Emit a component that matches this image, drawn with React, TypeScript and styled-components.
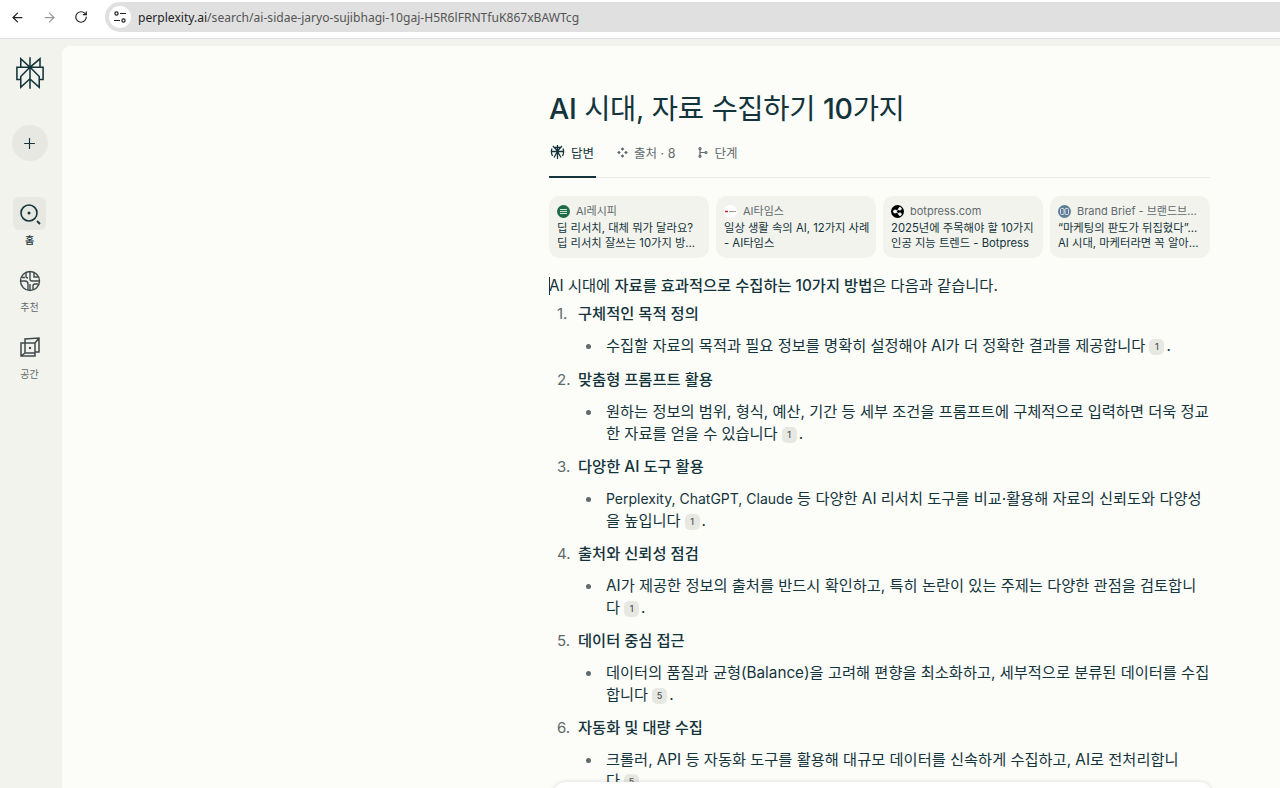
import React from "react";
import styled, { createGlobalStyle } from "styled-components";
import { ArrowLeft, ArrowRight, RotateCw, Plus } from "lucide-react";
import { SiPerplexity } from "react-icons/si";

const Global = createGlobalStyle`
  html, body { margin: 0; padding: 0; height: 788px; overflow: hidden; background: #f3f3ee; }
  #root { height: 788px; }
  * { box-sizing: border-box; }
`;

const Page = styled.div`
  width: 1280px; height: 788px; overflow: hidden; display: flex; flex-direction: column;
  font-family: Inter, "Noto Sans CJK KR", sans-serif; color: #13343b;
`;
const Chrome = styled.header`
  height: 39px; flex: none; background: #fff; border-bottom: 1px solid #e2e2e2;
  display: flex; align-items: flex-start; padding: 2px 0 0 1px;
`;
const NavBtn = styled.div<{ $off?: boolean }>`
  width: 32px; height: 30px; display: flex; align-items: center; justify-content: center;
  color: ${(p) => (p.$off ? "#9a9a9a" : "#222")};
`;
const Omni = styled.div`
  margin-left: 8px; width: 1175px; height: 30px; background: #e0e0e0; border-radius: 15px 0 0 15px;
  display: flex; align-items: center; padding-left: 4px; font-size: 12.1px; font-family: "Noto Sans", sans-serif;
  color: #555;
`;
const Tune = styled.div`
  width: 22px; height: 22px; border-radius: 50%; background: #fff; display: flex; align-items: center;
  justify-content: center; margin-right: 7px; color: #222;
`;
const Host = styled.span` color: #1f1f1f; `;
const Body = styled.div` flex: 1; display: flex; min-height: 0; `;
const Side = styled.aside`
  width: 62px; flex: none; background: #f3f3ee; display: flex; flex-direction: column; align-items: center;
  padding-top: 17px;
`;
const Logo = styled.div` width: 32px; height: 33px; color: #13343b; margin-left: -3px; display: flex; align-items: center; justify-content: center; `;
const NewBtn = styled.div`
  margin-top: 36px; margin-left: -3px; width: 36px; height: 36px; border-radius: 50%; background: #e8e8e3; display: flex;
  align-items: center; justify-content: center; color: #13343b;
`;
const NavItem = styled.div<{ $active?: boolean }>`
  display: flex; flex-direction: column; align-items: center; margin-left: -3px; margin-top: ${(p) => (p.$active ? "36px" : "17px")};
  font-size: 10px; line-height: 14px; color: ${(p) => (p.$active ? "#13343b" : "#5f6a6c")};
  font-weight: ${(p) => (p.$active ? 500 : 400)};
`;
const NavIcon = styled.div<{ $active?: boolean }>`
  width: 33px; height: 33px; border-radius: 6px; background: ${(p) => (p.$active ? "#e8e8e3" : "transparent")};
  display: flex; align-items: center; justify-content: center; margin-bottom: 3px;
`;
const Main = styled.main`
  flex: 1; background: #fcfcf9; margin-top: 7px; border-radius: 8px 0 0 0; position: relative; overflow: hidden;
  padding: 43px 70px 0 487px;
`;
const Title = styled.h1`
  margin: 0; font-size: 28.55px; line-height: 40px; font-weight: 400; color: #13343b; letter-spacing: -0.3px; white-space: nowrap;
  strong { font-weight: 500; }
`;
const Tabs = styled.nav`
  margin-top: 6px; height: 43px; border-bottom: 1px solid #ebebe6; display: flex; gap: 20px;
`;
const Tab = styled.div<{ $active?: boolean }>`
  display: flex; align-items: center; gap: 6px; height: 43px; padding: 0 ${(p) => (p.$active ? "2px" : "1px")} 7px 1px; font-size: 12.5px;
  color: ${(p) => (p.$active ? "#13343b" : "#5f6a6c")};
  border-bottom: 2px solid ${(p) => (p.$active ? "#13343b" : "transparent")};
  svg { flex: none; }
`;
const Cards = styled.section`
  margin-top: 18px; display: grid; grid-template-columns: repeat(4, 1fr); gap: 7px;
`;
const Card = styled.article`
  height: 62px; background: #f3f3ee; border-radius: 10px; padding: 8px 8px 0; overflow: hidden;
`;
const Source = styled.div`
  display: flex; align-items: center; gap: 6px; font-size: 11px; line-height: 14px; color: #5f6a6c; white-space: nowrap;
`;
const Fav = styled.span<{ $bg: string }>`
  width: 13px; height: 13px; border-radius: 50%; background: ${(p) => p.$bg}; flex: none; display: flex;
  align-items: center; justify-content: center; overflow: hidden;
`;
const CardText = styled.div`
  margin-top: 3px; font-size: 11.3px; line-height: 15px; color: #13343b; white-space: nowrap;
`;
const Answer = styled.div`
  margin-top: 17px; font-size: 15.3px; line-height: 22px; color: #13343b; white-space: nowrap;
  strong { font-weight: 500; }
`;
const Caret = styled.span`
  display: inline-block; width: 1px; height: 18px; background: #13343b; vertical-align: -4px; margin-right: -1px;
`;
const List = styled.ol`
  list-style: none; margin: 6px 0 0; padding: 0;
`;
const Item = styled.li`
  display: block; margin-bottom: 11.5px;
  &:first-child { margin-bottom: 12.5px; }
`;
const Head = styled.div`
  display: flex; line-height: 22px; font-weight: 500; font-size: 15.3px; color: #13343b;
`;
const Num = styled.span`
  width: 29px; padding-left: 8px; font-weight: 400; color: #5f6a6c; flex: none; font-size: 15px;
`;
const Sub = styled.div`
  margin-top: 10px; display: flex; font-size: 15.27px; line-height: 21.7px; white-space: nowrap;
`;
const Line = styled.div` height: 21.7px; `;
const Latin = styled.span` font-size: 14px; `;
const Dot = styled.span`
  width: 5px; height: 5px; background: #5f6a6c; border-radius: 50%; margin: 9px 15px 0 37px; flex: none;
`;
const Cite = styled.span`
  display: inline-block; width: 15px; height: 16px; text-align: center; border-radius: 5px; font-weight: 500;
  background: #e8e8e3; font-size: 9px; line-height: 16px; color: #4d5658; margin: 0 2px 0 4px; vertical-align: 1px;
`;
const InputBar = styled.div`
  position: absolute; left: 491px; top: 736px; width: 659px; height: 60px; background: #fff;
  border-radius: 12px; box-shadow: 0 0 4px rgba(0,0,0,.16);
`;

const items: { h: string; s: { pre?: string; t: string; c?: string }[] }[] = [
  { h: "구체적인 목적 정의", s: [{ t: "수집할 자료의 목적과 필요 정보를 명확히 설정해야 AI가 더 정확한 결과를 제공합니다", c: "1" }] },
  { h: "맞춤형 프롬프트 활용", s: [{ t: "원하는 정보의 범위, 형식, 예산, 기간 등 세부 조건을 프롬프트에 구체적으로 입력하면 더욱 정교" }, { t: "한 자료를 얻을 수 있습니다", c: "1" }] },
  { h: "다양한 AI 도구 활용", s: [{ pre: "Perplexity, ChatGPT, Claude", t: " 등 다양한 AI 리서치 도구를 비교·활용해 자료의 신뢰도와 다양성" }, { t: "을 높입니다", c: "1" }] },
  { h: "출처와 신뢰성 점검", s: [{ t: "AI가 제공한 정보의 출처를 반드시 확인하고, 특히 논란이 있는 주제는 다양한 관점을 검토합니" }, { t: "다", c: "1" }] },
  { h: "데이터 중심 접근", s: [{ t: "데이터의 품질과 균형(Balance)을 고려해 편향을 최소화하고, 세부적으로 분류된 데이터를 수집" }, { t: "합니다", c: "5" }] },
  { h: "자동화 및 대량 수집", s: [{ t: "크롤러, API 등 자동화 도구를 활용해 대규모 데이터를 신속하게 수집하고, AI로 전처리합니" }, { t: "다", c: "5" }] },
];

const RecipeIcon = () => (
  <svg width="9" height="9" viewBox="0 0 9 9" fill="none" stroke="#cfe8d8" strokeWidth="1">
    <path d="M1 2.500h7M1 4.500h7M1 6.500h7" />
  </svg>
);
const TimesIcon = () => (
  <svg width="13" height="13" viewBox="0 0 13 13"><rect width="13" height="13" fill="#fff" /><path d="M1 6.500h3" stroke="#c22" strokeWidth="1.400" /><path d="M5 6.500h7" stroke="#999" strokeWidth="1" /></svg>
);
const ShareIcon = () => (
  <svg width="11" height="11" viewBox="0 0 11 11" fill="#fff" stroke="#fff" strokeWidth="0.800">
    <circle cx="3" cy="5.500" r="1.500" /><circle cx="8" cy="2.800" r="1.300" /><circle cx="8" cy="8.200" r="1.300" /><path d="M8 2.800 3 5.500l5 2.700" fill="none" />
  </svg>
);
const BrandIcon = () => (
  <svg width="13" height="13" viewBox="0 0 13 13" fill="none" stroke="#dfe8ee" strokeWidth="0.900">
    <rect x="2.500" y="3.500" width="3.500" height="6" rx="1" /><rect x="7" y="3.500" width="3.500" height="6" rx="1" />
  </svg>
);

const cards = [
  { src: "AI레시피", bg: "#1f6b45", icon: <RecipeIcon />, a: "딥 리서치, 대체 뭐가 달라요?", b: "딥 리서치 잘쓰는 10가지 방…" },
  { src: "AI타임스", bg: "#ffffff", icon: <TimesIcon />, a: "일상 생활 속의 AI, 12가지 사례", b: "- AI타임스" },
  { src: "botpress.com", bg: "#000", icon: <ShareIcon />, a: "2025년에 주목해야 할 10가지", b: "인공 지능 트렌드 - Botpress" },
  { src: "Brand Brief - 브랜드브…", bg: "#5f7f96", icon: <BrandIcon />, a: "“마케팅의 판도가 뒤집혔다”…", b: "AI 시대, 마케터라면 꼭 알아…" },
];

export default function App() {
  return (
    <Page>
      <Global />
      <Chrome>
        <NavBtn><ArrowLeft size={15} strokeWidth={2} /></NavBtn>
        <NavBtn $off><ArrowRight size={15} strokeWidth={2} /></NavBtn>
        <NavBtn><RotateCw size={14} strokeWidth={2} /></NavBtn>
        <Omni>
          <Tune>
            <svg width="14" height="14" viewBox="0 0 14 14" fill="none" stroke="currentColor" strokeWidth="1.200">
              <circle cx="3.500" cy="3.500" r="1.600" /><path d="M7 3.500h6M1 10.500h6" /><circle cx="10.500" cy="10.500" r="1.600" />
            </svg>
          </Tune>
          <Host>perplexity.ai</Host>/search/ai-sidae-jaryo-sujibhagi-10gaj-H5R6lFRNTfuK867xBAWTcg
        </Omni>
      </Chrome>
      <Body>
        <Side>
          <Logo><SiPerplexity size={32} /></Logo>
          <NewBtn><Plus size={17} strokeWidth={1.6} /></NewBtn>
          <NavItem $active>
            <NavIcon $active>
              <svg width="24" height="24" viewBox="0 0 24 24" fill="none" stroke="#13343b" strokeWidth="1.600">
                <circle cx="11" cy="11" r="8" /><circle cx="11" cy="11" r="1.500" fill="#13343b" stroke="none" /><path d="m19 19 3 3" strokeWidth="1.800" />
              </svg>
            </NavIcon>
            홈
          </NavItem>
          <NavItem>
            <NavIcon>
              <svg width="22" height="22" viewBox="0 0 22 22" fill="none" stroke="#3f4a4c" strokeWidth="1.400">
                <circle cx="11" cy="11" r="9.500" />
                <path d="M2 11h4a3 3 0 0 1 3 3v6M11 2v7a2 2 0 0 0 2 2h7M7 3v3a2 2 0 0 0 2 2M14 20v-4a2 2 0 0 1 2-2h3M3 7.500h3M15 3v4h4M11 14v6" />
              </svg>
            </NavIcon>
            추천
          </NavItem>
          <NavItem>
            <NavIcon>
              <svg width="21" height="21" viewBox="0 0 21 21" fill="none" stroke="#3f4a4c" strokeWidth="1.500">
                <path d="M2 6h4V2l14-1v14h-4v4H2ZM6 6h10v10H6ZM2 19l4-3M16 6l4-5" /><circle cx="11" cy="11" r="1.200" fill="#3f4a4c" stroke="none" />
              </svg>
            </NavIcon>
            공간
          </NavItem>
        </Side>
        <Main>
          <Title><strong>AI</strong> 시대, 자료 수집하기 <strong>10</strong>가지</Title>
          <Tabs>
            <Tab $active>
              <svg width="15" height="16" viewBox="0 0 15 16" fill="none" stroke="currentColor" strokeWidth="1.300">
                <path d="M7.500 1v14M3 2l4.500 5L12 2M1.500 7.500h12M4 13.500l3.500-6 3.500 6" />
                <path d="M2 4.500Q.500 8 2.500 12M13 4.500q1.500 3.500-.5 7.500M5 3.500h5" />
              </svg>
              답변
            </Tab>
            <Tab>
              <svg width="11" height="11" viewBox="0 0 11 11" fill="currentColor">
                <rect x="4.200" y="0.700" width="2.600" height="2.600" transform="rotate(45 5.500 2)" />
                <rect x="0.700" y="4.200" width="2.600" height="2.600" transform="rotate(45 2 5.500)" />
                <rect x="7.700" y="4.200" width="2.600" height="2.600" transform="rotate(45 9 5.500)" />
                <rect x="4.200" y="7.700" width="2.600" height="2.600" transform="rotate(45 5.500 9)" />
              </svg>
              출처 · 8
            </Tab>
            <Tab>
              <svg width="11" height="11" viewBox="0 0 11 11" fill="none" stroke="currentColor" strokeWidth="1.200">
                <path d="M3 2v7M3 5.500h5" /><circle cx="3" cy="1.700" r="1" /><circle cx="3" cy="9.300" r="1" /><circle cx="9" cy="5.500" r="1" />
              </svg>
              단계
            </Tab>
          </Tabs>
          <Cards>
            {cards.map((c) => (
              <Card key={c.src}>
                <Source><Fav $bg={c.bg}>{c.icon}</Fav>{c.src}</Source>
                <CardText>{c.a}<br />{c.b}</CardText>
              </Card>
            ))}
          </Cards>
          <Answer><Caret />AI 시대에 <strong>자료를 효과적으로 수집하는 10가지 방법</strong>은 다음과 같습니다.</Answer>
          <List>
            {items.map((it, i) => (
              <Item key={it.h}>
                <Head><Num>{i + 1}.</Num>{it.h}</Head>
                <Sub>
                  <Dot />
                  <div>
                    {it.s.map((l, j) => (
                      <Line key={j}>
                        {l.pre && <Latin>{l.pre}</Latin>}
                        {l.t}
                        {l.c && <><Cite>{l.c}</Cite>.</>}
                      </Line>
                    ))}
                  </div>
                </Sub>
              </Item>
            ))}
          </List>
          <InputBar />
        </Main>
      </Body>
    </Page>
  );
}
